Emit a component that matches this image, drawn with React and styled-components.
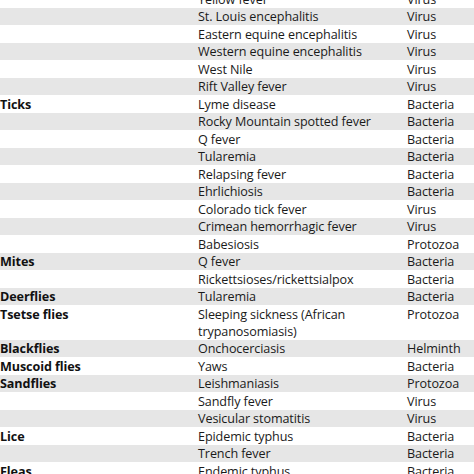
import React from 'react';
import styled, { createGlobalStyle } from 'styled-components';

const GlobalStyle = createGlobalStyle`
  html, body {
    margin: 0;
    padding: 0;
    background: #ffffff;
    overflow: hidden;
  }
`;

const Table = styled.div`
  margin-top: -10px;
  width: 474px;
  font-family: "Open Sans", Lato, sans-serif;
  font-size: 12.6px;
  letter-spacing: -0.1px;
  font-variant-ligatures: none;
  color: #1a1a1a;
`;

const Row = styled.div`
  display: grid;
  grid-template-columns: 198px 209px 1fr;
  align-items: start;
  background: ${(p) => (p.$shaded ? '#e6e6e6' : '#ffffff')};
  padding-top: 0.5px;
  height: ${(p) => (p.$tall ? '34.5px' : '17.5px')};
  line-height: 17px;
  box-sizing: border-box;
`;

const Vector = styled.span`
  font-weight: 700;
  color: #111;
`;

const Disease = styled.span`
  padding-right: 8px;
`;

const Agent = styled.span``;

const rows = [
  ['', 'Yellow fever', 'Virus'],
  ['', 'St. Louis encephalitis', 'Virus'],
  ['', 'Eastern equine encephalitis', 'Virus'],
  ['', 'Western equine encephalitis', 'Virus'],
  ['', 'West Nile', 'Virus'],
  ['', 'Rift Valley fever', 'Virus'],
  ['Ticks', 'Lyme disease', 'Bacteria'],
  ['', 'Rocky Mountain spotted fever', 'Bacteria'],
  ['', 'Q fever', 'Bacteria'],
  ['', 'Tularemia', 'Bacteria'],
  ['', 'Relapsing fever', 'Bacteria'],
  ['', 'Ehrlichiosis', 'Bacteria'],
  ['', 'Colorado tick fever', 'Virus'],
  ['', 'Crimean hemorrhagic fever', 'Virus'],
  ['', 'Babesiosis', 'Protozoa'],
  ['Mites', 'Q fever', 'Bacteria'],
  ['', 'Rickettsioses/rickettsialpox', 'Bacteria'],
  ['Deerflies', 'Tularemia', 'Bacteria'],
  ['Tsetse flies', 'Sleeping sickness (African trypanosomiasis)', 'Protozoa', true],
  ['Blackflies', 'Onchocerciasis', 'Helminth'],
  ['Muscoid flies', 'Yaws', 'Bacteria'],
  ['Sandflies', 'Leishmaniasis', 'Protozoa'],
  ['', 'Sandfly fever', 'Virus'],
  ['', 'Vesicular stomatitis', 'Virus'],
  ['Lice', 'Epidemic typhus', 'Bacteria'],
  ['', 'Trench fever', 'Bacteria'],
  ['Fleas', 'Endemic typhus', 'Bacteria'],
  ['', 'Plague', 'Bacteria'],
];

export default function App() {
  return (
    <>
      <GlobalStyle />
      <Table>
        {rows.map(([vector, disease, agent, tall], i) => (
          <Row key={i} $shaded={i % 2 === 1} $tall={tall}>
            <Vector>{vector}</Vector>
            <Disease>{disease}</Disease>
            <Agent>{agent}</Agent>
          </Row>
        ))}
      </Table>
    </>
  );
}
